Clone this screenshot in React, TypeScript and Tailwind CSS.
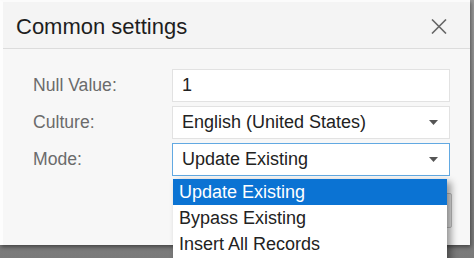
import React from "react";

function Caret() {
  return (
    <svg width="9" height="5" viewBox="0 0 9 5" className="shrink-0">
      <path d="M0 0 L9 0 L4.5 5 Z" fill="#555" />
    </svg>
  );
}

function Row({ label, children }: { label: string; children: React.ReactNode }) {
  return (
    <div className="flex items-center">
      <div className="w-[139px] text-[17.6px] text-[#6b6b6b]">{label}</div>
      {children}
    </div>
  );
}

export default function App() {
  const options = ["Update Existing", "Bypass Existing", "Insert All Records"];
  return (
    <div
      className="w-[474px] h-[258px] overflow-hidden bg-gradient-to-b from-[#9a9a9a] to-[#7a7a7a]"
      style={{ fontFamily: '"Liberation Sans", Arial, sans-serif' }}
    >
      <div className="relative w-[470px] h-[245px] bg-[#f7f7f7] border-l-[3px] border-t-[2px] border-l-[#fdfdfd] border-t-[#fbfbfb] shadow-[1px_2px_4px_rgba(0,0,0,0.45)] flex flex-col">
        <div className="h-[47px] shrink-0 bg-[#f4f4f4] border-b border-[#dcdcdc] flex items-start justify-between pl-[13px] pr-[23px] pt-[14px]">
          <span className="text-[22px] leading-[22px] text-[#1e1e1e]">Common settings</span>
          <svg width="16" height="15" viewBox="0 0 16 15" className="mt-[3px]">
            <path d="M1 0.5 L15 14.5 M15 0.5 L1 14.5" stroke="#666" strokeWidth="1.6" />
          </svg>
        </div>
        <div className="flex flex-col gap-[4px] pl-[30px] pt-[20px]">
          <Row label="Null Value:">
            <div className="w-[278px] h-[33px] bg-white border border-[#e2e2e2] flex items-center px-[9px] text-[18px] text-[#222]">
              1
            </div>
          </Row>
          <Row label="Culture:">
            <div className="w-[278px] h-[33px] bg-white border border-[#e2e2e2] flex items-center justify-between pl-[9px] pr-[11px] text-[18px] text-[#222]">
              <span>English (United States)</span>
              <Caret />
            </div>
          </Row>
          <Row label="Mode:">
            <div className="relative">
              <div className="w-[278px] h-[33px] bg-white border border-[#62a9e2] flex items-center justify-between pl-[9px] pr-[11px] text-[18px] text-[#222]">
                <span>Update Existing</span>
                <Caret />
              </div>
              <div className="absolute left-[1px] top-[36px] w-[274px] pb-[8px] bg-white shadow-[4px_3px_7px_rgba(0,0,0,0.4)] z-10">
                {options.map((o, i) => (
                  <div
                    key={o}
                    className={
                      i === 0
                        ? "h-[26px] flex items-center pl-[6px] text-[18px] bg-[#0b73d3] text-white"
                        : "h-[26px] flex items-center pl-[6px] text-[18px] text-[#222]"
                    }
                  >
                    {o}
                  </div>
                ))}
              </div>
            </div>
          </Row>
        </div>
        <div className="flex justify-end pr-[18px] mt-[17px]">
          <div className="w-[90px] h-[35px] bg-[#e4e4e4] border border-[#bdbdbd] rounded-[2px] flex items-center justify-center text-[16px] text-[#333]">
            Cancel
          </div>
        </div>
      </div>
    </div>
  );
}
